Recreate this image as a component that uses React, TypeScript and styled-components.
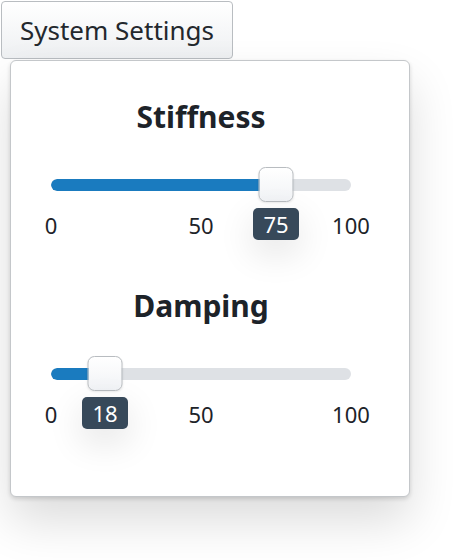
import React from "react";
import styled, { createGlobalStyle } from "styled-components";

const Global = createGlobalStyle`
  html, body { margin: 0; padding: 0; background: #fff; }
  body { font-family: "Noto Sans", "Open Sans", sans-serif; color: #1d2329; }
`;

const Page = styled.div`
  display: flex;
  flex-direction: column;
  align-items: flex-start;
  padding: 1px 0 0 1px;
  min-height: 100vh;
  box-sizing: border-box;
`;

const Trigger = styled.button`
  height: 58px;
  width: 232px;
  padding: 0 10px;
  border: 1px solid #b9bdc1;
  border-radius: 4px;
  background: linear-gradient(#ffffff, #eef0f2);
  font-family: inherit;
  font-size: 26px;
  color: #23282d;
  cursor: pointer;
`;

const Panel = styled.div`
  margin: 1px 0 0 9px;
  width: 400px;
  height: 437px;
  box-sizing: border-box;
  background: #fff;
  border: 1px solid #c4c7ca;
  border-radius: 6px;
  box-shadow: 0 24px 48px rgba(0, 0, 0, 0.14), 0 2px 4px rgba(0, 0, 0, 0.14);
  padding: 38px 60px 0 40px;
  display: flex;
  flex-direction: column;
  gap: 48px;
`;

const Section = styled.section`
  display: flex;
  flex-direction: column;
  width: 300px;
`;

const Title = styled.h2`
  margin: 0;
  font-size: 30px;
  line-height: 36px;
  font-weight: 700;
  text-align: center;
  color: #1d2329;
`;

const Slider = styled.div`
  position: relative;
  height: 35px;
  margin-top: 32px;
  display: flex;
  align-items: center;
`;

const Track = styled.div`
  width: 100%;
  height: 12px;
  border-radius: 6px;
  background: #dee1e5;
  overflow: hidden;
`;

const Fill = styled.div`
  height: 100%;
  background: #1a7bbf;
  border-radius: 6px 0 0 6px;
`;

const Thumb = styled.div`
  position: absolute;
  top: 0;
  width: 35px;
  height: 35px;
  box-sizing: border-box;
  transform: translateX(-50%);
  border: 1px solid #b8bcc0;
  border-radius: 7px;
  background: linear-gradient(#ffffff, #f1f3f6);
  box-shadow: 0 1px 2px rgba(0, 0, 0, 0.08);
`;

const Scale = styled.div`
  position: relative;
  height: 32px;
  margin-top: 6px;
`;

const Tick = styled.span`
  position: absolute;
  top: 1px;
  line-height: 32px;
  font-size: 22px;
  color: #1d2329;
  transform: translateX(-50%);
`;

const Badge = styled.span`
  position: absolute;
  top: 0;
  height: 32px;
  min-width: 46px;
  padding: 0 6px;
  box-sizing: border-box;
  transform: translateX(-50%);
  border-radius: 5px;
  background: #37495a;
  color: #fff;
  font-size: 22px;
  line-height: 32px;
  text-align: center;
  box-shadow: 0 12px 36px rgba(0, 0, 0, 0.12);
`;

type SettingProps = { label: string; value: number };

const Setting: React.FC<SettingProps> = ({ label, value }) => (
  <Section>
    <Title>{label}</Title>
    <Slider>
      <Track>
        <Fill style={{ width: `${value}%` }} />
      </Track>
      <Thumb style={{ left: `${value}%` }} />
    </Slider>
    <Scale>
      {[0, 50, 100].map((t) => (
        <Tick key={t} style={{ left: `${t}%` }}>
          {t}
        </Tick>
      ))}
      <Badge style={{ left: `${value}%` }}>{value}</Badge>
    </Scale>
  </Section>
);

export default function App() {
  return (
    <>
      <Global />
      <Page>
        <Trigger>System Settings</Trigger>
        <Panel>
          <Setting label="Stiffness" value={75} />
          <Setting label="Damping" value={18} />
        </Panel>
      </Page>
    </>
  );
}
